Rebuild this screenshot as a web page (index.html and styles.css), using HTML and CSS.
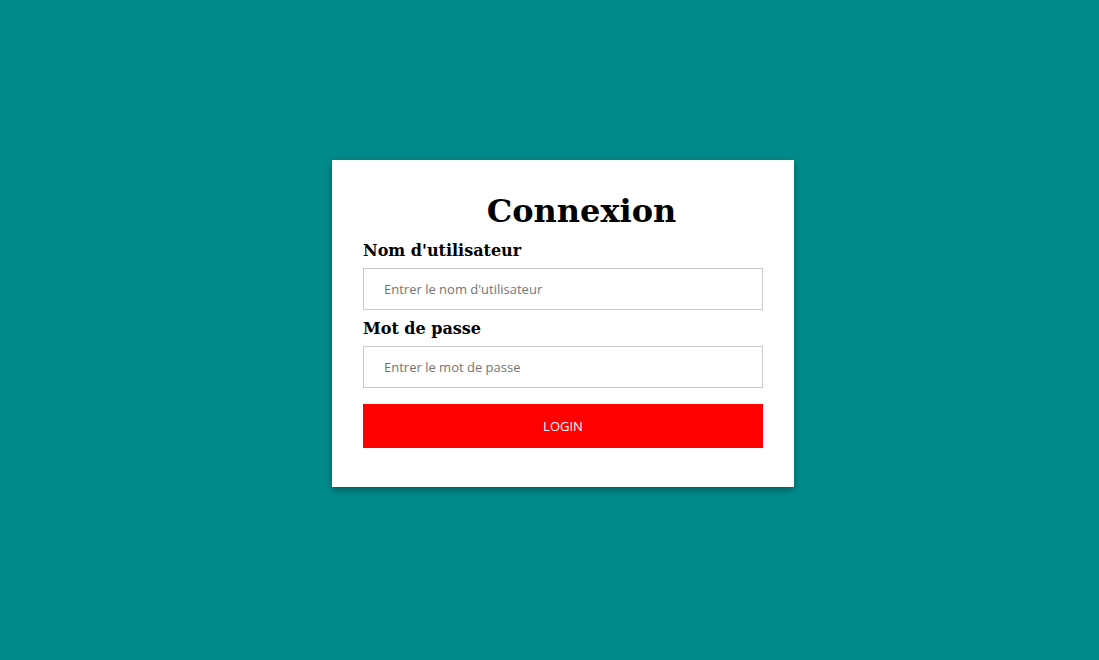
FILE: index.html
```html
<!DOCTYPE html>
<html lang="fr">
<head>
<meta charset="utf-8">
<title>Connexion</title>
<link rel="stylesheet" href="styles.css">
</head>
<body>
<div class="page">
  <form class="card">
    <h1 class="title">Connexion</h1>
    <label class="label" for="user">Nom d'utilisateur</label>
    <input class="field" id="user" type="text" placeholder="Entrer le nom d'utilisateur">
    <label class="label" for="pass">Mot de passe</label>
    <input class="field" id="pass" type="password" placeholder="Entrer le mot de passe">
    <button class="btn" type="button">LOGIN</button>
  </form>
</div>
</body>
</html>
```
FILE: styles.css
```css
html, body {
  margin: 0;
  padding: 0;
  height: 100%;
  background: #008b8b;
}
.page {
  height: 660px;
  display: flex;
  justify-content: center;
  align-items: flex-start;
  padding-top: 160px;
  padding-left: 27px;
  box-sizing: border-box;
}
.card {
  width: 462px;
  box-sizing: border-box;
  background: #fff;
  padding: 31px 31px 39px 31px;
  display: flex;
  flex-direction: column;
  box-shadow: 0 3px 8px rgba(0,0,0,0.35);
}
.title {
  margin: 0 0 8px 0;
  font-family: "DejaVu Serif", serif;
  font-weight: bold;
  font-size: 32px;
  line-height: 40px;
  text-align: center;
  padding-left: 37px;
  color: #000;
}
.label {
  font-family: "DejaVu Serif", serif;
  font-weight: bold;
  font-size: 16px;
  line-height: 22px;
  color: #000;
  margin-top: 1px;
  margin-bottom: 6px;
}
.field {
  height: 42px;
  box-sizing: border-box;
  border: 1px solid #c8c8c8;
  padding: 0 20px;
  font-family: "Open Sans", sans-serif;
  font-size: 13px;
  color: #333;
  margin: 0 0 7px 0;
  outline: none;
}
.field::placeholder {
  color: #757575;
}
#pass { margin-bottom: 16px; }
.btn {
  height: 44px;
  border: none;
  background: #ff0000;
  color: #fff;
  font-family: "Open Sans", sans-serif;
  font-size: 13px;
  cursor: pointer;
  padding: 0;
}
```
